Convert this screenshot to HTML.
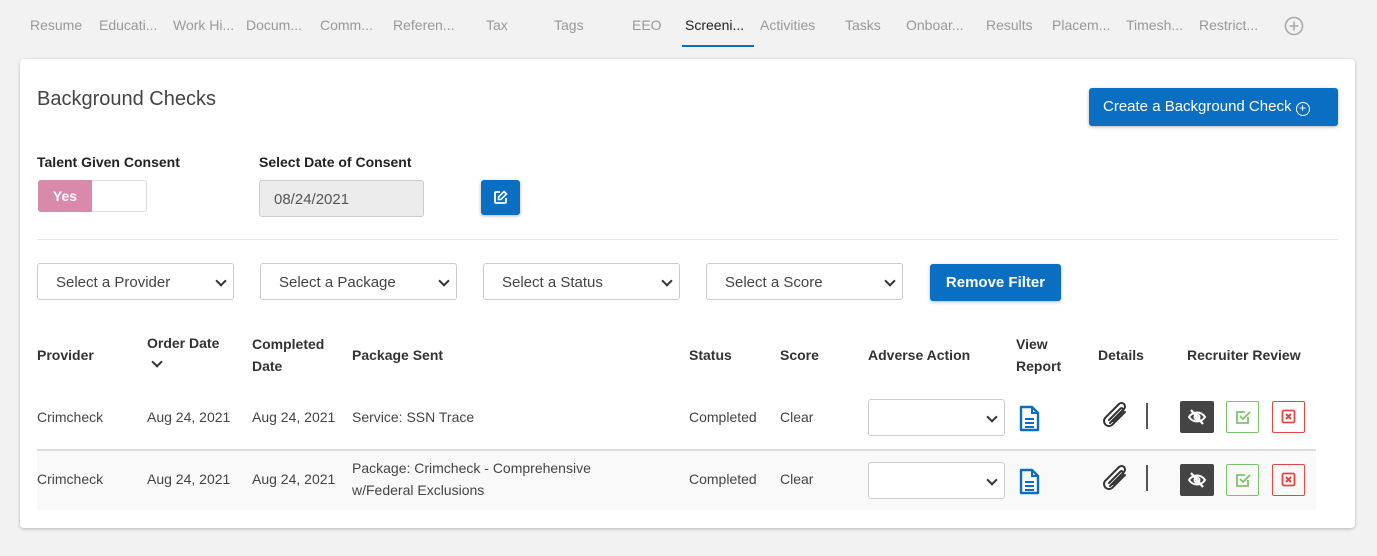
<!DOCTYPE html>
<html><head><style>
*{box-sizing:border-box;margin:0;padding:0}
body{width:1377px;height:556px;background:#f2f2f2;font-family:"Liberation Sans",sans-serif;position:relative;overflow:hidden;color:#333}
.a{position:absolute;white-space:nowrap}
.tab{position:absolute;top:17px;font-size:14px;color:#999}
.card{position:absolute;left:20px;top:59px;width:1335px;height:469px;background:#fff;border-radius:4px;box-shadow:0 1px 3px rgba(0,0,0,.25)}
.sel{position:absolute;height:37px;width:197px;border:1px solid #ccc;border-radius:3px;background:#fff;font-size:15px;color:#444;padding:10px 0 0 18px}
.sel:after{content:"";position:absolute;right:8px;top:13px;width:6px;height:6px;border-right:2px solid #333;border-bottom:2px solid #333;transform:rotate(45deg)}
.th{position:absolute;font-size:14px;font-weight:bold;color:#333;line-height:22px}
.td{position:absolute;font-size:14px;color:#444;line-height:22px}
.btn{position:absolute;background:#0a6fc2;color:#fff;border-radius:3px;font-size:15px;font-weight:bold;box-shadow:0 1px 3px rgba(0,0,0,.3)}
</style></head><body>
<div class="tab" style="left:30px">Resume</div>
<div class="tab" style="left:99px">Educati...</div>
<div class="tab" style="left:173px">Work Hi...</div>
<div class="tab" style="left:246px">Docum...</div>
<div class="tab" style="left:320px">Comm...</div>
<div class="tab" style="left:393px">Referen...</div>
<div class="tab" style="left:486px">Tax</div>
<div class="tab" style="left:554px">Tags</div>
<div class="tab" style="left:632px">EEO</div>
<div class="tab" style="left:685px;color:#222">Screeni...</div>
<div class="a" style="left:682px;top:45px;width:72px;height:2px;background:#0a6fc2"></div>
<div class="tab" style="left:760px">Activities</div>
<div class="tab" style="left:845px">Tasks</div>
<div class="tab" style="left:906px">Onboar...</div>
<div class="tab" style="left:986px">Results</div>
<div class="tab" style="left:1052px">Placem...</div>
<div class="tab" style="left:1126px">Timesh...</div>
<div class="tab" style="left:1199px">Restrict...</div>
<svg class="a" style="left:1284px;top:16px" width="20" height="20" viewBox="0 0 20 20"><circle cx="10" cy="10" r="8.5" fill="none" stroke="#aaa" stroke-width="1.6"/><path d="M10 5.5v9M5.5 10h9" stroke="#aaa" stroke-width="1.6"/></svg>

<div class="card"></div>
<div class="a" style="left:37px;top:88px;font-size:20px;color:#444">Background Checks</div>
<div class="btn" style="left:1089px;top:88px;width:249px;height:38px;padding:10px 0 0 14px;font-weight:normal">Create a Background Check <span style="display:inline-block;width:14px;height:14px;border:1.6px solid #fff;border-radius:50%;font-size:12px;line-height:10px;text-align:center;vertical-align:-1px">+</span></div>

<div class="a" style="left:37px;top:154px;font-size:14px;font-weight:bold;color:#222">Talent Given Consent</div>
<div class="a" style="left:259px;top:154px;font-size:14px;font-weight:bold;color:#222">Select Date of Consent</div>
<div class="a" style="left:38px;top:180px;width:109px;height:32px;border:1px solid #ddd;border-radius:3px;background:#fff"></div>
<div class="a" style="left:38px;top:180px;width:54px;height:32px;background:#d98aab;border-radius:3px 0 0 3px;color:#fff;font-weight:bold;font-size:14px;text-align:center;line-height:32px">Yes</div>
<div class="a" style="left:259px;top:180px;width:165px;height:37px;border:1px solid #ccc;border-radius:3px;background:#ececec;font-size:15px;color:#555;padding:10px 0 0 14px">08/24/2021</div>
<div class="btn" style="left:481px;top:180px;width:39px;height:35px"><svg style="position:absolute;left:12px;top:10px" width="15" height="15" viewBox="0 0 15 15"><path d="M7 2H3a1 1 0 0 0-1 1v9a1 1 0 0 0 1 1h9a1 1 0 0 0 1-1V8" fill="none" stroke="#fff" stroke-width="1.8"/><path d="M11 1.5l2.5 2.5L8 9.5H5.5V7z" fill="none" stroke="#fff" stroke-width="1.6"/></svg></div>
<div class="a" style="left:37px;top:239px;width:1301px;height:1px;background:#e5e5e5"></div>

<div class="sel" style="left:37px;top:263px">Select a Provider</div>
<div class="sel" style="left:260px;top:263px">Select a Package</div>
<div class="sel" style="left:483px;top:263px">Select a Status</div>
<div class="sel" style="left:706px;top:263px">Select a Score</div>
<div class="btn" style="left:930px;top:264px;width:131px;height:37px;text-align:center;line-height:38px">Remove Filter</div>

<div class="th" style="left:37px;top:344px">Provider</div>
<div class="th" style="left:147px;top:332px">Order Date</div>
<div class="a" style="left:153px;top:358px;width:8px;height:8px;border-right:2.5px solid #333;border-bottom:2.5px solid #333;transform:rotate(45deg)"></div>
<div class="th" style="left:252px;top:333px">Completed<br>Date</div>
<div class="th" style="left:352px;top:344px">Package Sent</div>
<div class="th" style="left:689px;top:344px">Status</div>
<div class="th" style="left:780px;top:344px">Score</div>
<div class="th" style="left:868px;top:344px">Adverse Action</div>
<div class="th" style="left:1016px;top:333px">View<br>Report</div>
<div class="th" style="left:1098px;top:344px">Details</div>
<div class="th" style="left:1187px;top:344px">Recruiter Review</div>

<div class="a" style="left:37px;top:449px;width:1279px;height:61px;background:#f9f9f9;border-top:2px solid #ddd"></div>

<div class="td" style="left:37px;top:406px">Crimcheck</div>
<div class="td" style="left:147px;top:406px">Aug 24, 2021</div>
<div class="td" style="left:252px;top:406px">Aug 24, 2021</div>
<div class="td" style="left:352px;top:406px">Service: SSN Trace</div>
<div class="td" style="left:689px;top:406px">Completed</div>
<div class="td" style="left:780px;top:406px">Clear</div>

<div class="td" style="left:37px;top:468px">Crimcheck</div>
<div class="td" style="left:147px;top:468px">Aug 24, 2021</div>
<div class="td" style="left:252px;top:468px">Aug 24, 2021</div>
<div class="td" style="left:352px;top:457px">Package: Crimcheck - Comprehensive<br>w/Federal Exclusions</div>
<div class="td" style="left:689px;top:468px">Completed</div>
<div class="td" style="left:780px;top:468px">Clear</div>

<div class="sel" style="left:868px;top:399px;width:137px"></div>
<div class="sel" style="left:868px;top:462px;width:137px"></div>

<svg class="a" style="left:1018px;top:405px" width="23" height="28" viewBox="0 0 23 28"><path d="M3 2h11l6 6v17H3z" fill="none" stroke="#0a6fc2" stroke-width="2.4" stroke-linejoin="round"/><path d="M14 2v6h6M7 14h9M7 18h9M7 22h9" stroke="#0a6fc2" stroke-width="2" fill="none"/></svg>
<svg class="a" style="left:1018px;top:468px" width="23" height="28" viewBox="0 0 23 28"><path d="M3 2h11l6 6v17H3z" fill="none" stroke="#0a6fc2" stroke-width="2.4" stroke-linejoin="round"/><path d="M14 2v6h6M7 14h9M7 18h9M7 22h9" stroke="#0a6fc2" stroke-width="2" fill="none"/></svg>

<svg class="a" style="left:1100px;top:401px" width="32" height="28" viewBox="0 0 32 28"><path d="M10 22L24 8a3.5 3.5 0 0 0-5-5L5 17a5 5 0 0 0 7 7l13-13M13 20l10-10a1.8 1.8 0 0 0-2.5-2.5L9 19" fill="none" stroke="#333" stroke-width="2" stroke-linecap="round"/></svg>
<svg class="a" style="left:1100px;top:464px" width="32" height="28" viewBox="0 0 32 28"><path d="M10 22L24 8a3.5 3.5 0 0 0-5-5L5 17a5 5 0 0 0 7 7l13-13M13 20l10-10a1.8 1.8 0 0 0-2.5-2.5L9 19" fill="none" stroke="#333" stroke-width="2" stroke-linecap="round"/></svg>
<div class="a" style="left:1146px;top:403px;width:2px;height:26px;background:#555"></div>
<div class="a" style="left:1146px;top:465px;width:2px;height:26px;background:#555"></div>

<div class="a" style="left:1180px;top:401px;width:34px;height:32px;background:#444;border-radius:2px"><svg style="position:absolute;left:7px;top:6px" width="20" height="20" viewBox="0 0 20 20"><path d="M2 10c4-6 12-6 16 0-4 6-12 6-16 0z" fill="none" stroke="#fff" stroke-width="2"/><circle cx="10" cy="10" r="2.5" fill="none" stroke="#fff" stroke-width="2"/><path d="M4 3l12 14" stroke="#fff" stroke-width="2.2"/></svg></div>
<div class="a" style="left:1226px;top:401px;width:33px;height:32px;border:1.5px solid #7cc46a;border-radius:2px"><svg style="position:absolute;left:7px;top:6px" width="18" height="18" viewBox="0 0 18 18"><path d="M14 9v6H3V4h8" fill="none" stroke="#7cc46a" stroke-width="1.8"/><path d="M6 8l3 3 7-7" fill="none" stroke="#7cc46a" stroke-width="1.8"/></svg></div>
<div class="a" style="left:1272px;top:401px;width:33px;height:32px;border:1.5px solid #e04848;border-radius:2px"><svg style="position:absolute;left:8px;top:7px" width="15" height="15" viewBox="0 0 15 15"><rect x="1.5" y="1.5" width="12" height="12" rx="1.5" fill="none" stroke="#e04848" stroke-width="1.8"/><path d="M5 5l5 5M10 5l-5 5" stroke="#e04848" stroke-width="2"/></svg></div>

<div class="a" style="left:1180px;top:464px;width:34px;height:32px;background:#444;border-radius:2px"><svg style="position:absolute;left:7px;top:6px" width="20" height="20" viewBox="0 0 20 20"><path d="M2 10c4-6 12-6 16 0-4 6-12 6-16 0z" fill="none" stroke="#fff" stroke-width="2"/><circle cx="10" cy="10" r="2.5" fill="none" stroke="#fff" stroke-width="2"/><path d="M4 3l12 14" stroke="#fff" stroke-width="2.2"/></svg></div>
<div class="a" style="left:1226px;top:464px;width:33px;height:32px;border:1.5px solid #7cc46a;border-radius:2px"><svg style="position:absolute;left:7px;top:6px" width="18" height="18" viewBox="0 0 18 18"><path d="M14 9v6H3V4h8" fill="none" stroke="#7cc46a" stroke-width="1.8"/><path d="M6 8l3 3 7-7" fill="none" stroke="#7cc46a" stroke-width="1.8"/></svg></div>
<div class="a" style="left:1272px;top:464px;width:33px;height:32px;border:1.5px solid #e04848;border-radius:2px"><svg style="position:absolute;left:8px;top:7px" width="15" height="15" viewBox="0 0 15 15"><rect x="1.5" y="1.5" width="12" height="12" rx="1.5" fill="none" stroke="#e04848" stroke-width="1.8"/><path d="M5 5l5 5M10 5l-5 5" stroke="#e04848" stroke-width="2"/></svg></div>
</body></html>
